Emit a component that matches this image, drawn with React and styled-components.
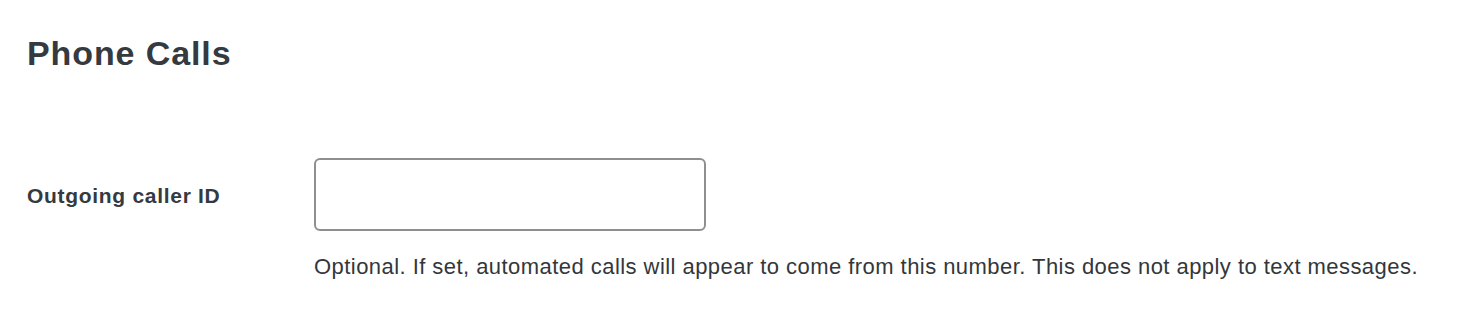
import React from 'react';
import styled, { createGlobalStyle } from 'styled-components';

const GlobalStyle = createGlobalStyle`
  html, body { margin: 0; padding: 0; background: #fff; }
  body { font-family: "Liberation Sans", Arial, Helvetica, sans-serif; color: #343a3f; }
`;

const Page = styled.div`
  padding: 30px 27px 0;
`;

const Heading = styled.h2`
  margin: 0;
  font-size: 34px;
  font-weight: bold;
  letter-spacing: 0.9px;
  line-height: 46px;
  color: #343a3f;
`;

const FieldRow = styled.div`
  display: grid;
  grid-template-columns: 287px 1fr;
  align-items: start;
  margin-top: 82px;
`;

const Label = styled.label`
  font-size: 21px;
  font-weight: bold;
  letter-spacing: 0.7px;
  line-height: 26px;
  padding-top: 25px;
  color: #343a3f;
`;

const Control = styled.div`
  display: flex;
  flex-direction: column;
  gap: 20px;
`;

const TextInput = styled.input`
  box-sizing: border-box;
  width: 392px;
  height: 73px;
  border: 2px solid #8f8f8f;
  border-radius: 6px;
  padding: 0 14px;
  font-size: 21px;
  font-family: inherit;
  outline: none;
`;

const Help = styled.p`
  margin: 0;
  font-size: 22px;
  letter-spacing: 0.45px;
  line-height: 32px;
  color: #33373b;
`;

export default function App() {
  return (
    <>
      <GlobalStyle />
      <Page>
        <Heading>Phone Calls</Heading>
        <FieldRow>
          <Label htmlFor="caller-id">Outgoing caller ID</Label>
          <Control>
            <TextInput id="caller-id" type="text" />
            <Help>
              Optional. If set, automated calls will appear to come from this number. This does not apply to text messages.
            </Help>
          </Control>
        </FieldRow>
      </Page>
    </>
  );
}
